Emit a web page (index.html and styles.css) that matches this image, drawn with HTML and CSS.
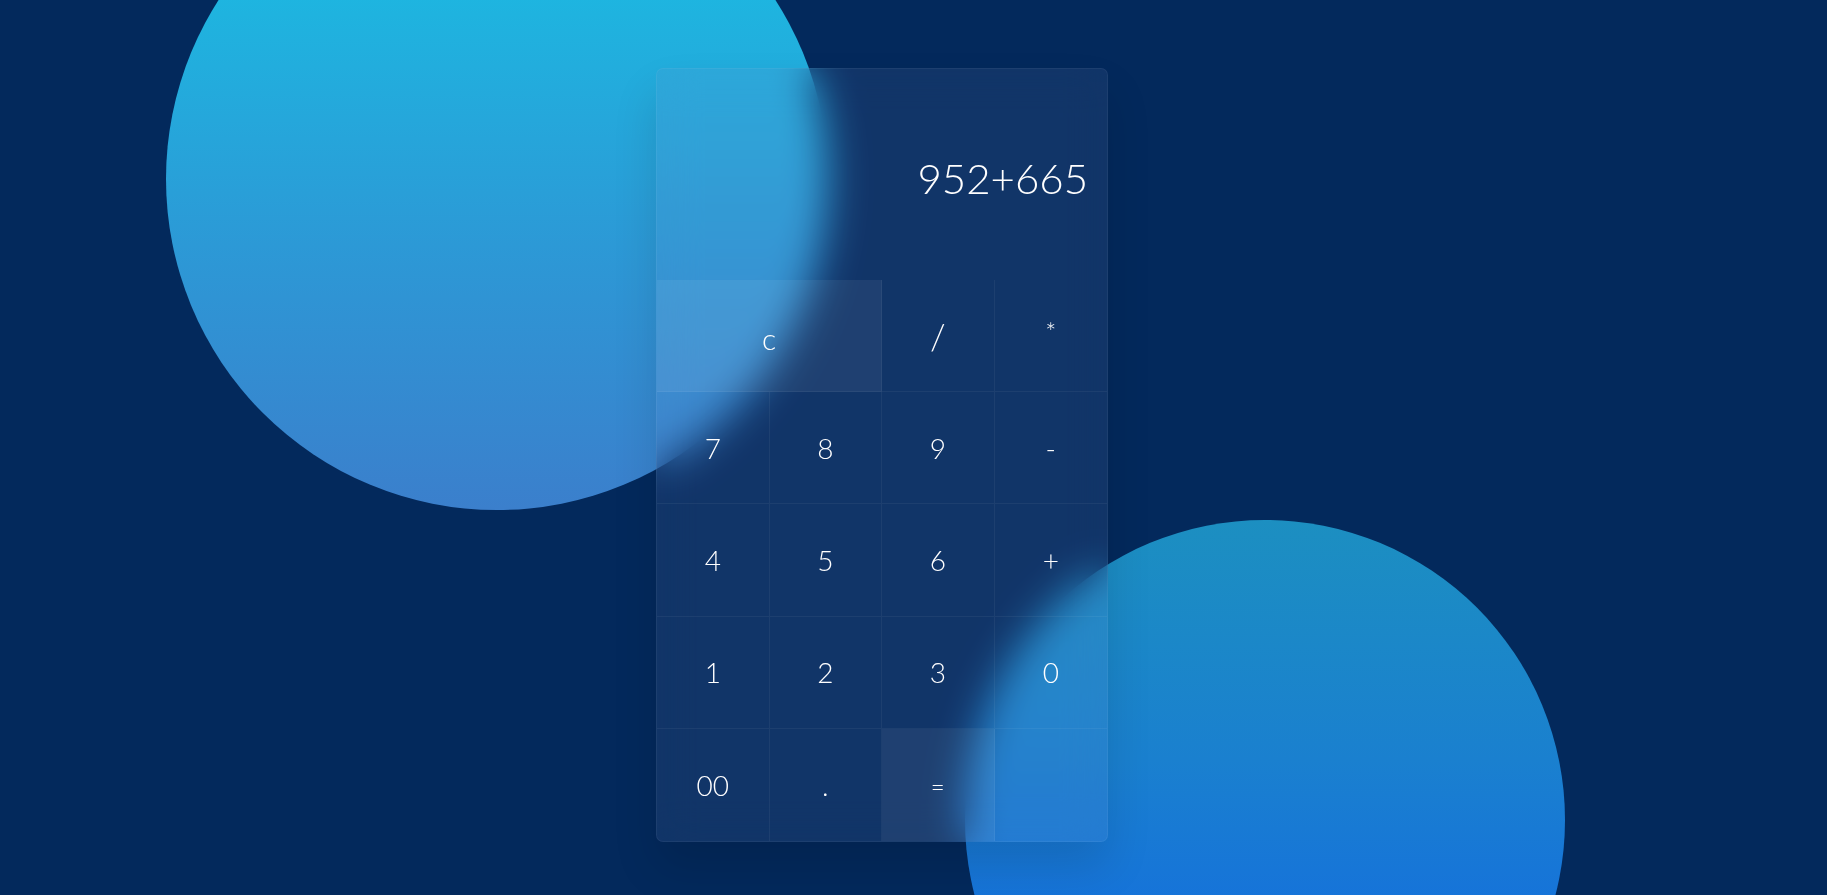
FILE: index.html
```html
<!DOCTYPE html>
<html lang="en">
<head>
<meta charset="utf-8">
<title>Glass Calculator</title>
<link rel="stylesheet" href="styles.css">
</head>
<body>
<div class="scene">
  <div class="blob blob-top"></div>
  <div class="blob blob-bottom"></div>
  <div class="calculator">
    <div class="display">952+665</div>
    <div class="keys">
      <div class="key key-wide key-light key-c">c</div>
      <div class="key key-slash">/</div>
      <div class="key key-star">*</div>
      <div class="key">7</div>
      <div class="key">8</div>
      <div class="key">9</div>
      <div class="key">-</div>
      <div class="key">4</div>
      <div class="key">5</div>
      <div class="key">6</div>
      <div class="key">+</div>
      <div class="key">1</div>
      <div class="key">2</div>
      <div class="key">3</div>
      <div class="key">0</div>
      <div class="key">00</div>
      <div class="key">.</div>
      <div class="key key-light key-eq">=</div>
      <div class="key"></div>
    </div>
  </div>
</div>
</body>
</html>
```
FILE: styles.css
```css
* { box-sizing: border-box; }
html, body { margin: 0; padding: 0; }
body {
  background: #03295c;
  font-family: Lato, "Open Sans", sans-serif;
  overflow: hidden;
  height: 100vh;
}
.scene {
  position: relative;
  width: 100%;
  height: 100vh;
  overflow: hidden;
  padding: 68px 0 0 656px;
}
.blob {
  position: absolute;
  border-radius: 50%;
}
.blob-top {
  left: 166px;
  top: -152px;
  width: 662px;
  height: 662px;
  background: linear-gradient(180deg, #14c6ea 0%, #1fb3df 25%, #2c99d6 60%, #3b7fcc 100%);
}
.blob-bottom {
  left: 965px;
  top: 520px;
  width: 600px;
  height: 600px;
  background: linear-gradient(180deg, #1c8fc1 0%, #1a80cf 40%, #1570dc 70%, #1466e4 100%);
}
.calculator {
  position: relative;
  width: 452px;
  height: 774px;
  border-radius: 7px;
  background: rgba(120, 140, 200, 0.12);
  border: 1px solid rgba(255, 255, 255, 0.05);
  backdrop-filter: blur(20px);
  -webkit-backdrop-filter: blur(20px);
  box-shadow: 0 25px 45px rgba(0, 0, 0, 0.12);
  display: flex;
  flex-direction: column;
  overflow: hidden;
  color: #fff;
}
.display {
  height: 211px;
  display: flex;
  align-items: center;
  justify-content: flex-end;
  padding: 6px 19px 0 0;
  font-size: 42px;
  font-weight: 300;
}
.keys {
  flex: 1;
  display: grid;
  grid-template-columns: repeat(4, 1fr);
  grid-template-rows: repeat(5, 1fr);
}
.key {
  display: flex;
  align-items: center;
  justify-content: center;
  font-size: 28px;
  font-weight: 300;
  border-right: 1px solid rgba(255, 255, 255, 0.05);
  border-bottom: 1px solid rgba(255, 255, 255, 0.05);
}
.key:nth-child(4n + 3), .key:last-child { border-right: none; }
.keys .key:nth-last-child(-n + 4) { border-bottom: none; }
.key-wide { grid-column: span 2; }
.key-light { background: rgba(255, 255, 255, 0.06); }
.key-c { font-size: 30px; padding-top: 4px; }
.key-slash { font-size: 36px; }
.key-star { font-size: 26px; padding-bottom: 8px; }
.key-eq { font-size: 24px; padding-top: 4px; }
```
